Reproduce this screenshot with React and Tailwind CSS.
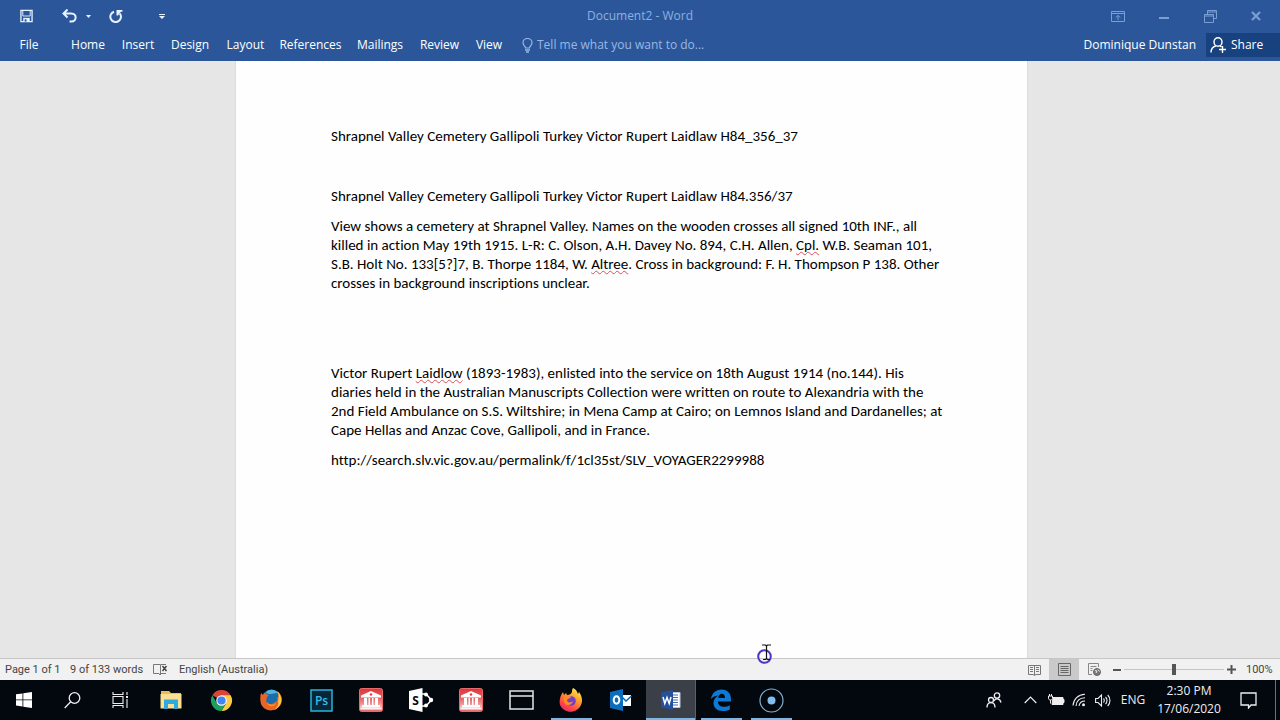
import React, { useState } from 'react';

const tabs = [
  { label: 'Home', width: 'w-[52px]' },
  { label: 'Insert', width: 'w-[48px]' },
  { label: 'Design', width: 'w-[56px]' },
  { label: 'Layout', width: 'w-[55px]' },
  { label: 'References', width: 'w-[75px]' },
  { label: 'Mailings', width: 'w-[64px]' },
  { label: 'Review', width: 'w-[55px]' },
  { label: 'View', width: 'w-[44px]' },
];

function Misspelt({ children }) {
  return (
    <span className="underline decoration-wavy decoration-1 decoration-[#d8505a] underline-offset-1 [text-decoration-skip-ink:none]">
      {children}
    </span>
  );
}

function TitleBar() {
  return (
    <div className="grid h-8 grid-cols-[1fr_auto_1fr] items-center text-[#e8f1ff]">
      <div className="flex items-center">
        <button aria-label="Save" className="ml-5 flex w-[13px] justify-center">
          <svg width="13" height="14" viewBox="0 0 14 14" fill="none" stroke="currentColor">
            <path d="M1 1h12v12H1z" strokeWidth="1.4" />
            <path d="M3 1v6h8V1" strokeWidth="1" />
            <path d="M3.500 13V9h7v4z" fill="currentColor" stroke="none" />
            <path d="M5 10.500h2V13H5z" fill="#2b579a" stroke="none" />
          </svg>
        </button>
        <button aria-label="Undo" className="ml-[29px] flex w-4">
          <svg width="16" height="14" viewBox="0 0 16 14" fill="none" stroke="currentColor" strokeWidth="2">
            <path d="M5.500 0.500L1.500 4.500l4 4M2 4.500h7.500c5.500 0 5.500 8 0 8H7.500" />
          </svg>
        </button>
        <button aria-label="Undo history" className="ml-2 flex w-[5px]">
          <svg width="5" height="3" viewBox="0 0 5 3" fill="currentColor">
            <path d="M0 0h5L2.500 3z" />
          </svg>
        </button>
        <button aria-label="Redo" className="ml-[18px] flex w-[14px]">
          <svg width="14" height="14" viewBox="0 0 14 14" fill="none" stroke="currentColor" strokeWidth="2">
            <path d="M5 2.700a5.300 5.300 0 1 0 5.700 1.600" />
            <path d="M7.500 1H13.500V2.500L11.500 3L9 6.500H7.500z" fill="currentColor" stroke="none" />
          </svg>
        </button>
        <button aria-label="Customize Quick Access Toolbar" className="ml-9 flex w-[6px]">
          <svg width="6" height="5" viewBox="0 0 6 5" fill="currentColor">
            <path d="M0 0h6v1H0zM0 2h6L3 5z" />
          </svg>
        </button>
      </div>
      <h1 className="text-[12px] leading-4 text-[#8fb0de]">Document2 - Word</h1>
      <div className="flex items-center justify-end pr-px text-[#7c9fd3]">
        <button aria-label="Ribbon Display Options" className="flex h-8 w-[46px] items-center justify-center">
          <svg width="14" height="11" viewBox="0 0 14 11" fill="none" stroke="currentColor">
            <path d="M0.500 0.500h13v10H0.500zM0.500 2.500h13M7 9V4.500M4.800 6.500L7 4.300l2.200 2.200" />
          </svg>
        </button>
        <button aria-label="Minimize" className="flex h-8 w-[46px] items-center justify-center">
          <svg width="10" height="10" viewBox="0 0 10 10" fill="currentColor">
            <path d="M0 6h10v2H0z" />
          </svg>
        </button>
        <button aria-label="Restore Down" className="flex h-8 w-[46px] items-center justify-center">
          <svg width="13" height="13" viewBox="0 0 13 13" fill="none" stroke="currentColor">
            <path d="M0.500 4.500h9v8h-9zM0.500 6h9M3.500 4V0.500h9v8H10M3.500 2h9" />
          </svg>
        </button>
        <button aria-label="Close" className="flex h-8 w-[46px] items-center justify-center">
          <svg width="10" height="10" viewBox="0 0 10 10" fill="none" stroke="currentColor" strokeWidth="2.200">
            <path d="M1 1l8 8M9 1L1 9" />
          </svg>
        </button>
      </div>
    </div>
  );
}

function Ribbon() {
  return (
    <div className="flex h-[29px] items-start pt-px text-[12px] leading-6 text-white">
      <button className="w-[58px]">File</button>
      <nav className="ml-1 flex">
        {tabs.map(t => (
          <button key={t.label} className={`${t.width} flex justify-center`}>{t.label}</button>
        ))}
      </nav>
      <label className="ml-[11px] flex h-6 items-center gap-1 text-[#9ab7e2]">
        <svg width="11" height="15" viewBox="0 0 11 15" fill="none" stroke="currentColor" strokeWidth="1.200">
          <path d="M3.500 10C3.500 8 1 7.500 1 4.800a4.500 4.300 0 0 1 9 0C10 7.500 7.500 8 7.500 10z" />
          <path d="M3 12h5M4 14h3" strokeWidth="1.600" />
        </svg>
        <input
          type="text"
          aria-label="Tell me what you want to do"
          placeholder="Tell me what you want to do..."
          className="w-[190px] bg-transparent outline-none placeholder:text-[#9ab7e2]"
        />
      </label>
      <div className="ml-auto flex">
        <button className="mr-[10px]">Dominique Dunstan</button>
        <button className="flex h-6 w-[74px] items-center gap-1 bg-[#17417f] pl-1">
          <svg width="17" height="16" viewBox="0 0 17 16" fill="none" stroke="currentColor" strokeWidth="1.400">
            <ellipse cx="8" cy="5" rx="4" ry="4.300" />
            <path d="M1 15.500c0-3.500 2-5.700 4.800-6.500M10 9l1.500 1M12.500 9v7M9 12.500h7" />
          </svg>
          Share
        </button>
      </div>
    </div>
  );
}

function DocumentPage() {
  return (
    <main className="flex min-h-0 flex-1 justify-center overflow-hidden bg-[#e6e6e6] pr-[17px]">
      <article className="flex w-[793px] flex-col gap-[11px] whitespace-nowrap border-x border-[#dcdcdc] bg-[#fefefe] px-[95px] pt-[66px] font-[Carlito,Lato,sans-serif] text-[15px] leading-[19px] text-black [font-variant-ligatures:none]">
        <p>Shrapnel Valley Cemetery Gallipoli Turkey Victor Rupert Laidlaw H84_356_37</p>
        <p>&nbsp;</p>
        <p>Shrapnel Valley Cemetery Gallipoli Turkey Victor Rupert Laidlaw H84.356/37</p>
        <p>
          View shows a cemetery at Shrapnel Valley. Names on the wooden crosses all signed 10th INF., all<br />
          killed in action May 19th 1915. L-R: C. Olson, A.H. Davey No. 894, C.H. Allen, <Misspelt>Cpl.</Misspelt> W.B. Seaman 101,<br />
          S.B. Holt No. 133[5?]7, B. Thorpe 1184, W. <Misspelt>Altree</Misspelt>. Cross in background: F. H. Thompson P 138. Other<br />
          crosses in background inscriptions unclear.
        </p>
        <p>&nbsp;</p>
        <p>&nbsp;</p>
        <p>
          Victor Rupert <Misspelt>Laidlow</Misspelt> (1893-1983), enlisted into the service on 18th August 1914 (no.144). His<br />
          diaries held in the Australian Manuscripts Collection were written on route to Alexandria with the<br />
          2nd Field Ambulance on S.S. Wiltshire; in Mena Camp at Cairo; on Lemnos Island and Dardanelles; at<br />
          Cape Hellas and Anzac Cove, Gallipoli, and in France.
        </p>
        <p>http://search.slv.vic.gov.au/permalink/f/1cl35st/SLV_VOYAGER2299988</p>
      </article>
    </main>
  );
}

function StatusBar() {
  const [zoom, setZoom] = useState(100);

  return (
    <footer className="flex h-[22px] shrink-0 items-center border-t border-[#c6c6c6] bg-[#f1f1f1] font-[Roboto,sans-serif] text-[11px] leading-4 text-[#444]">
      <button className="ml-[5px] w-[53px] whitespace-nowrap text-left">Page 1 of 1</button>
      <button className="ml-3 w-[72px] whitespace-nowrap text-left">9 of 133 words</button>
      <button aria-label="Proofing errors" className="ml-[11px] flex w-4">
        <svg width="16" height="13" viewBox="0 0 16 13" fill="none" stroke="#777">
          <path d="M7 1.500H0.500v9H6l1 1.500 1-1.500h5M7.500 1.500V12M7.500 1.500H13" />
          <path d="M9.500 3l4 5M13.500 3l-4 5" stroke="#444" strokeWidth="1.500" />
        </svg>
      </button>
      <button className="ml-[10px] whitespace-nowrap">English (Australia)</button>
      <div className="ml-auto flex h-full items-center">
        <button aria-label="Read Mode" className="flex h-full w-[30px] items-center justify-center">
          <svg width="13" height="12" viewBox="0 0 13 12" fill="none" stroke="#777">
            <path d="M6 1.500H0.500v9H5l1.500 1L8 10.500h4.500v-9H7M6.500 1v10M2 3.500h3M2 5.500h3M2 7.500h3M8 3.500h3M8 5.500h3M8 7.500h3" />
          </svg>
        </button>
        <button aria-label="Print Layout" className="flex h-full w-[30px] items-center justify-center bg-[#c9c9c9]">
          <svg width="13" height="13" viewBox="0 0 13 13" fill="none" stroke="#666">
            <path d="M0.500 0.500h12v12H0.500zM2.500 3.500h8M2.500 5.500h8M2.500 7.500h8M2.500 9.500h8" />
          </svg>
        </button>
        <button aria-label="Web Layout" className="flex h-full w-[31px] items-center justify-center">
          <svg width="13" height="13" viewBox="0 0 13 13" fill="none" stroke="#888">
            <path d="M10.500 4V0.500H0.500v11H4M2.500 3.500h6M2.500 5.500h2M2.500 7.500h2" />
            <circle cx="9" cy="9" r="3.500" fill="#777" stroke="#666" />
            <path d="M7 7.500l2 0.500-1 2M10 6.500l1.500 2" stroke="#eee" />
          </svg>
        </button>
        <button aria-label="Zoom Out" className="ml-[3px] flex w-2">
          <svg width="8" height="8" viewBox="0 0 8 8" fill="#555">
            <path d="M0 3h8v2H0z" />
          </svg>
        </button>
        <input
          type="range"
          aria-label="Zoom"
          min="10"
          max="190"
          value={zoom}
          onChange={e => setZoom(Number(e.target.value))}
          className="mx-[3px] h-3 w-[100px] appearance-none bg-[linear-gradient(#c4c4c4,#c4c4c4)] bg-[length:100%_1px] bg-center bg-no-repeat [&::-webkit-slider-thumb]:h-[11px] [&::-webkit-slider-thumb]:w-1 [&::-webkit-slider-thumb]:appearance-none [&::-webkit-slider-thumb]:bg-[#555]"
        />
        <button aria-label="Zoom In" className="flex w-[9px]">
          <svg width="9" height="9" viewBox="0 0 9 9" fill="#555">
            <path d="M0 3.500h9v2H0zM3.500 0h2v9h-2z" />
          </svg>
        </button>
        <button className="ml-[10px] w-[34px] text-left">{zoom}%</button>
      </div>
    </footer>
  );
}

function LibraryIcon() {
  return (
    <svg width="26" height="26" viewBox="0 0 26 26">
      <defs>
        <linearGradient id="library" x1="0" y1="0" x2="0" y2="1">
          <stop offset="0" stopColor="#e0363b" />
          <stop offset="0.350" stopColor="#e2575a" />
          <stop offset="0.650" stopColor="#ee8e8f" />
          <stop offset="0.850" stopColor="#f9c3c3" />
          <stop offset="1" stopColor="#e2494d" />
        </linearGradient>
      </defs>
      <rect x="1.500" y="1.500" width="23" height="23" rx="2" fill="url(#library)" stroke="#e8696c" />
      <g fill="#fff">
        <path d="M3 8.500L13 4l10 4.500V10.500H3zM6 11h3v7H6zM10.500 11h1.500v7h-1.500zM14 11h1.500v7H14zM17 11h3v7h-3zM4 18h18v2.500H4z" />
        <path d="M2.500 21h21v1.500h-21z" fillOpacity="0.800" />
      </g>
      <circle cx="13" cy="7.500" r="1.200" fill="#e5383d" />
    </svg>
  );
}

function ExplorerIcon() {
  return (
    <svg width="22" height="20" viewBox="0 0 22 20">
      <path d="M1 1h8l2 2h10v15H1z" fill="#e9bd52" />
      <path d="M0.500 4h21v14.500h-21z" fill="#fbe094" />
      <path d="M4 9.500h14V19h-4v-5H8v5H4z" fill="#2fa9df" />
    </svg>
  );
}

function ChromeIcon() {
  return (
    <svg width="23" height="23" viewBox="0 0 24 24">
      <path d="M12 12L2.470 6.500A11 11 0 0 1 21.530 6.500z" fill="#dc4437" />
      <path d="M12 6.500h9.530A11 11 0 0 1 12 23l4.760-8.250z" fill="#fdcd3f" />
      <path d="M7.240 14.750L2.470 6.500A11 11 0 0 0 12 23l4.760-8.250z" fill="#1da15f" />
      <circle cx="12" cy="12" r="5.500" fill="#f4f4f4" />
      <circle cx="12" cy="12" r="4.300" fill="#4285f4" />
    </svg>
  );
}

function OldFirefoxIcon() {
  return (
    <svg width="24" height="24" viewBox="0 0 24 24">
      <circle cx="12.500" cy="11.500" r="10" fill="#1c6dae" />
      <path d="M7 4c4-4 11-2 13 2-3-2-5 0-8 0C9 6 8 6 7 4z" fill="#4fb5e3" />
      <path d="M2 5l2 2c1-2 2-2 3-2 0 1 1 2 3 2l-2 2c-1 1 0 3-1 4 1 4 7 4 9 1 2 0 3-2 2-4 2-1 2-4 0-7 5 3 6 9 4 13-4 8-16 9-20 0C1 12 1 8 2 5z" fill="#ea6424" />
      <path d="M18 3c7 6 5 16-3 19 4-3 5-6 4-9 1-3 1-7-1-10z" fill="#fccb3f" />
      <path d="M8 14c3 4 7 3 9 1-1 4-8 5-9-1z" fill="#f7972c" />
    </svg>
  );
}

function PhotoshopIcon() {
  return (
    <svg width="23" height="23" viewBox="0 0 23 23">
      <rect x="1" y="1" width="21" height="21" fill="#08263a" stroke="#27b5dd" strokeWidth="1.500" />
      <text x="11.500" y="15.500" fill="#35bfe6" fontSize="12" fontWeight="600" fontFamily="Open Sans, sans-serif" textAnchor="middle">Ps</text>
    </svg>
  );
}

function SharePointIcon() {
  return (
    <svg width="26" height="24" viewBox="0 0 26 24">
      <path d="M14 6h4l5.500 6-5.500 6h-4" fill="none" stroke="#fff" strokeWidth="1.500" />
      <circle cx="18" cy="6.500" r="2" fill="#fff" />
      <circle cx="23" cy="12" r="2.200" fill="#fff" />
      <circle cx="18" cy="17.500" r="2" fill="#fff" />
      <path d="M1 3l13.500-3v24L1 21z" fill="#fff" />
      <text x="7.500" y="16.500" fill="#05090f" fontSize="12" fontWeight="700" fontFamily="Open Sans, sans-serif" textAnchor="middle">S</text>
    </svg>
  );
}

function WindowIcon() {
  return (
    <svg width="25" height="20" viewBox="0 0 25 20" fill="none" stroke="#e6e6e6" strokeWidth="1.500">
      <path d="M1 1h23v18H1zM1 6h23" />
    </svg>
  );
}

function FirefoxIcon() {
  return (
    <svg width="24" height="24" viewBox="0 0 24 24">
      <defs>
        <linearGradient id="fox" x1="0.800" y1="0" x2="0.200" y2="1">
          <stop offset="0" stopColor="#fff04a" />
          <stop offset="0.400" stopColor="#ff9a2a" />
          <stop offset="0.750" stopColor="#ff4647" />
          <stop offset="1" stopColor="#e52572" />
        </linearGradient>
      </defs>
      <path d="M14 0c4 2 4 4 5 6l1-2c3 4 4 9 2 13-4 9-17 9-21 0C0 13 1 8 4 4l1 3 2-2 1 2c3 0 4-1 5-3 0-1 0-3 1-4z" fill="url(#fox)" />
      <circle cx="12" cy="13" r="4.800" fill="#7440c9" />
      <path d="M5 9c2-2 5-2 7 0-1 2-3 1-4 3 0 3 4 3 6 1-1 4-5 5-8 3-1-2-2-5-1-7z" fill="#ff8a25" />
    </svg>
  );
}

function OutlookIcon() {
  return (
    <svg width="22" height="22" viewBox="0 0 22 22">
      <path d="M12 6h9v11h-9z" fill="#fff" />
      <path d="M12 8l4 4 5.500-5" fill="none" stroke="#0a64ad" strokeWidth="1.500" />
      <path d="M0 3l13-3v22L0 19z" fill="#0a6ebd" />
      <ellipse cx="6.500" cy="11" rx="2.800" ry="3.700" fill="none" stroke="#fff" strokeWidth="2" />
    </svg>
  );
}

function WordIcon() {
  return (
    <svg width="20" height="20" viewBox="0 0 20 20">
      <path d="M10 2.500h9v15h-9z" fill="#fff" stroke="#b7c7e2" />
      <path d="M11 5h6M11 7.500h6M11 10h6M11 12.500h6M11 15h6" stroke="#4a6cae" />
      <path d="M0 2.500L12 0v20L0 17.500z" fill="#25509b" />
      <path d="M2 7l1.800 6.500L6 7.500l2.200 6L10 7" fill="none" stroke="#fff" strokeWidth="1.500" />
    </svg>
  );
}

function EdgeIcon() {
  return (
    <svg width="22" height="22" viewBox="0 0 22 22">
      <path d="M1 10C2 4 6 0.500 11.500 0.500 18 0.500 21 5 21 10v2.500H8c0 4 3 5.300 6 5.300 2.200 0 4-0.600 5.800-1.600v4.200c-2 1-4.200 1.600-7 1.600C7 22 3.500 18.500 3.500 14 3.500 10.500 5.500 8 8.500 6.500 5 6.800 2.500 8 1 10zM8.200 9h6.800c0-3-1.400-4.200-3.200-4.200C10 4.800 8.500 6.500 8.200 9z" fill="#0c79d5" fillRule="evenodd" />
    </svg>
  );
}

function RecorderIcon() {
  return (
    <svg width="25" height="25" viewBox="0 0 25 25">
      <circle cx="12.500" cy="12.500" r="11.500" fill="none" stroke="#7fb1d3" strokeWidth="1.200" />
      <circle cx="12.500" cy="12.500" r="4" fill="#82bdee" />
    </svg>
  );
}

const pinned = [
  { name: 'File Explorer', Icon: ExplorerIcon },
  { name: 'Google Chrome', Icon: ChromeIcon },
  { name: 'Firefox ESR', Icon: OldFirefoxIcon },
  { name: 'Photoshop', Icon: PhotoshopIcon },
  { name: 'Library Catalogue', Icon: LibraryIcon },
  { name: 'SharePoint', Icon: SharePointIcon },
  { name: 'Library Archive', Icon: LibraryIcon },
  { name: 'Console', Icon: WindowIcon },
  { name: 'Firefox', Icon: FirefoxIcon, running: true },
  { name: 'Outlook', Icon: OutlookIcon },
  { name: 'Word', Icon: WordIcon, active: true },
  { name: 'Edge', Icon: EdgeIcon, running: true },
  { name: 'Recorder', Icon: RecorderIcon, running: true },
];

function Taskbar() {
  return (
    <div className="flex h-10 shrink-0 items-stretch bg-[#03070e] text-[#eee]">
      <button aria-label="Start" className="flex w-12 items-center justify-center">
        <svg width="16" height="16" viewBox="0 0 16 16" fill="#fff">
          <path d="M0 2.300L6.500 1.400V7.500H0zM7.300 1.300L16 0v7.500H7.300zM0 8.300h6.500v6.200L0 13.600zM7.300 8.300H16V16l-8.700-1.300z" />
        </svg>
      </button>
      <button aria-label="Search" className="flex w-12 items-center justify-center">
        <svg width="17" height="17" viewBox="0 0 17 17" fill="none" stroke="currentColor" strokeWidth="1.300">
          <circle cx="10.500" cy="6" r="5.300" />
          <path d="M6.700 9.800L0.700 16" />
        </svg>
      </button>
      <button aria-label="Task View" className="flex w-[50px] items-center justify-center pr-0.5">
        <svg width="17" height="16" viewBox="0 0 17 16" fill="none" stroke="currentColor" strokeWidth="1.100">
          <path d="M1 0v2.500h10V0M1 4.500h10v7H1zM1 16v-2.500h10V16M15 0v3M15 7v9" />
          <path d="M14 4h2v2h-2z" fill="currentColor" stroke="none" />
        </svg>
      </button>
      <div className="flex">
        {pinned.map(({ name, Icon, running, active }) => (
          <button
            key={name}
            aria-label={name}
            className={`flex w-[50px] flex-col items-center ${active ? 'border-r border-[#5b616a] bg-[#3b4048]' : ''}`}
          >
            <span className="flex flex-1 items-center"><Icon /></span>
            <span className={active ? '-mt-0.5 h-0.5 w-full bg-[#7db5e3]' : running ? '-mt-0.5 h-0.5 w-[41px] bg-[#7db5e3]' : ''} />
          </button>
        ))}
      </div>
      <div className="ml-auto flex items-center text-[12px]">
        <button aria-label="People" className="flex w-[34px] justify-center">
          <svg width="16" height="16" viewBox="0 0 16 16" fill="none" stroke="currentColor" strokeWidth="1.300">
            <circle cx="11" cy="3.500" r="2.700" />
            <circle cx="5" cy="8" r="2.500" />
            <path d="M8 9c1-3 6-3 7 1.500M1 15.500c0-6.500 8-6.500 8 0" />
          </svg>
        </button>
        <button aria-label="Show hidden icons" className="ml-1 flex w-[30px] justify-center">
          <svg width="13" height="8" viewBox="0 0 13 8" fill="none" stroke="currentColor" strokeWidth="1.200">
            <path d="M0.700 7L6.500 1l5.800 6" />
          </svg>
        </button>
        <button aria-label="Battery" className="flex w-[22px] justify-center">
          <svg width="17" height="12" viewBox="0 0 17 12" fill="none" stroke="currentColor">
            <path d="M5 3.500h10v7H4zM15 5.500h1v3H15z" fill="currentColor" />
            <path d="M0.500 2h4v2.500c0 2-4 2-4 0zM1.500 0v2M3.500 0v2M2.500 6v3.500" fill="#03070e" />
          </svg>
        </button>
        <button aria-label="Wi-Fi" className="flex w-6 justify-center">
          <svg width="14" height="14" viewBox="0 0 14 14" fill="none" stroke="currentColor" strokeWidth="1.100">
            <path d="M1 12.500C1.500 6 6 1.500 13 1.200M4 13C4.500 8 8 5 13 4.800M7 13c0.500-3 2.500-5 6-5" />
            <circle cx="11.500" cy="11.800" r="1.500" fill="currentColor" stroke="none" />
          </svg>
        </button>
        <button aria-label="Volume" className="flex w-6 justify-center">
          <svg width="16" height="13" viewBox="0 0 16 13" fill="none" stroke="currentColor" strokeWidth="1.100">
            <path d="M0.600 4.500H3l3.500-3.500v11L3 8.500H0.600zM8.500 4.500c1 1 1 3 0 4M10.500 3c2 2 2 5 0 7M12.700 1c3 3 3 8 0 11" />
          </svg>
        </button>
        <button aria-label="Keyboard language" className="flex w-9 justify-center">ENG</button>
        <button className="flex w-[76px] flex-col items-center leading-[18px]">
          <span>2:30 PM</span>
          <span>17/06/2020</span>
        </button>
        <button aria-label="Notifications" className="flex w-[42px] justify-center">
          <svg width="17" height="17" viewBox="0 0 17 17" fill="none" stroke="currentColor" strokeWidth="1.300">
            <path d="M1 1h15v12h-5l-2.500 3V13H1z" />
          </svg>
        </button>
        <button aria-label="Show desktop" className="ml-[6px] h-10 w-[5px] border-l border-[#6d7176]" />
      </div>
    </div>
  );
}

function Pointer() {
  return (
    <div className="pointer-events-none absolute left-[756px] top-[644px]">
      <svg width="18" height="22" viewBox="0 0 18 22" fill="none">
        <circle cx="8.500" cy="12.500" r="6.300" stroke="#4a35c8" strokeWidth="2" />
        <path d="M6 1h3.500l1 1 1-1H15M10.500 2v12M7 15.500h2.500l1-1 1 1H14" stroke="#111" strokeWidth="1.200" />
      </svg>
    </div>
  );
}

export default function App() {
  return (
    <div className="relative flex h-screen flex-col overflow-hidden font-['Open_Sans','Noto_Sans',sans-serif]">
      <header className="shrink-0 bg-[#2b579a]">
        <TitleBar />
        <Ribbon />
      </header>
      <DocumentPage />
      <StatusBar />
      <Taskbar />
      <Pointer />
    </div>
  );
}
